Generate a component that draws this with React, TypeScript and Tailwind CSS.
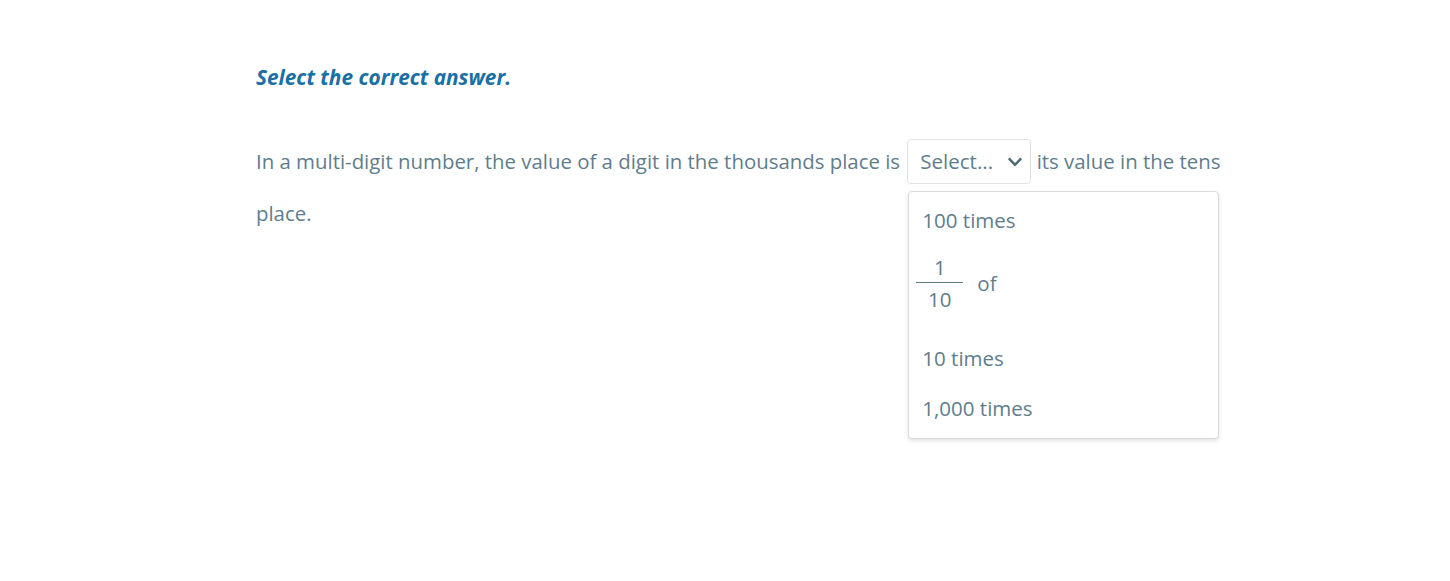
import React from "react";
import { FaChevronDown } from "react-icons/fa";

const options = ["100 times", "fraction", "10 times", "1,000 times"];

const Fraction = () => (
  <span className="inline-flex items-center gap-[14px]">
    <span className="inline-flex flex-col items-center w-[47px] -ml-[6px]">
      <span className="leading-[30px]">1</span>
      <span className="block w-full h-px bg-[#607d8b]" />
      <span className="leading-[32px]">10</span>
    </span>
    <span>of</span>
  </span>
);

const App = () => {
  return (
    <div className="min-h-[581px] bg-white font-['Open_Sans',sans-serif] text-[#607d8b]">
      <div className="pl-[256px] pt-[62px]">
        <h2 className="text-[20.8px] font-bold italic text-[#1a6fa3] leading-[30px]">
          Select the correct answer.
        </h2>

        <div className="relative mt-[43px] w-[975px] text-[20.4px] leading-[52px]">
          <p>
            In a multi-digit number, the value of a digit in the thousands place is{" "}
            <span className="relative inline-flex items-center align-middle h-[45px] w-[124px] ml-[2px] -mt-[4px] pl-[12px] pr-[7px] justify-between border border-[#dfe3e5] rounded-[4px] bg-white leading-none text-[20.5px]">
              <span>Select...</span>
              <FaChevronDown className="text-[#4f6975] w-[16px] h-[16px]" />
              <span className="absolute left-0 top-[51px] w-[311px] bg-white border border-[#dcdcdc] rounded-[4px] shadow-[0_2px_4px_rgba(0,0,0,0.12)] pt-[3px] pb-[5px] z-10 text-left">
                {options.map((o) =>
                  o === "fraction" ? (
                    <span key={o} className="flex items-center h-[88px] px-[13px] pb-[12px]">
                      <Fraction />
                    </span>
                  ) : (
                    <span key={o} className="flex items-center h-[50px] px-[13px]">
                      {o}
                    </span>
                  )
                )}
              </span>
            </span>{" "}
            its value in the tens place.
          </p>
        </div>
      </div>
    </div>
  );
};

export default App;
